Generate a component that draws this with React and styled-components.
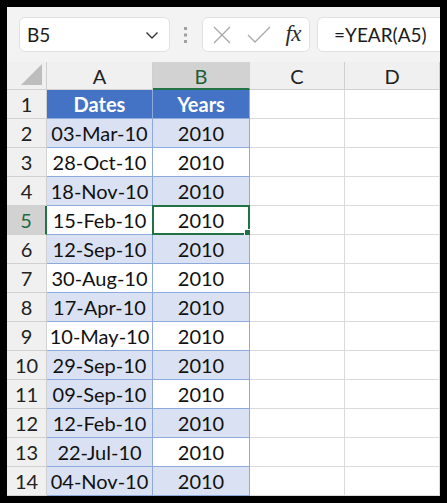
import React from "react";
import styled, { createGlobalStyle } from "styled-components";

const GlobalStyle = createGlobalStyle`
  html, body {
    margin: 0;
    padding: 0;
    background: #000;
  }
  body {
    font-family: Lato, "Liberation Sans", sans-serif;
  }
`;

const Frame = styled.div`
  box-sizing: border-box;
  width: 447px;
  height: 503px;
  padding: 7px;
  background: #000;
`;

const Window = styled.div`
  width: 433px;
  height: 489px;
  overflow: hidden;
  background: #f3f3f3;
  display: flex;
  flex-direction: column;
`;

const FormulaBar = styled.div`
  height: 55px;
  flex: none;
  display: flex;
  align-items: flex-start;
  padding: 10px 0 0 12px;
  box-sizing: border-box;
  overflow: hidden;
`;

const Box = styled.div`
  box-sizing: border-box;
  height: 35px;
  background: #fff;
  border: 1px solid #e1e1e1;
  border-radius: 6px;
  display: flex;
  align-items: center;
  flex: none;
`;

const NameBox = styled(Box)`
  width: 151px;
  padding: 0 8px 0 7px;
  justify-content: space-between;
  font-size: 19px;
  color: #1b1b1b;
`;

const Dots = styled.div`
  flex: none;
  width: 32px;
  height: 35px;
  display: flex;
  align-items: center;
  justify-content: center;
`;

const FxBox = styled(Box)`
  width: 108px;
  padding: 0 8px 0 9px;
  justify-content: space-between;
`;

const Fx = styled.span`
  font-family: "Liberation Serif", "DejaVu Serif", serif;
  font-style: italic;
  font-size: 23px;
  color: #2b2b2b;
  letter-spacing: -0.5px;
  padding-bottom: 2px;
`;

const FormulaBox = styled(Box)`
  margin-left: 7px;
  width: 220px;
  padding-left: 16px;
  font-size: 19px;
  color: #1b1b1b;
`;

const Grid = styled.div`
  display: grid;
  grid-template-columns: 40px 106px 97px 95px 95px;
  grid-template-rows: 28px repeat(14, 29px);
  background: #fff;
  font-size: 20px;
  color: #111;
`;

const Corner = styled.div`
  background: #f0f0f0;
  border-right: 1px solid #d0d0d0;
  border-bottom: 1px solid #d0d0d0;
  position: relative;
  overflow: hidden;
`;

const Triangle = styled.div`
  position: absolute;
  right: 4px;
  bottom: 4px;
  width: 0;
  height: 0;
  border-left: 21px solid transparent;
  border-bottom: 21px solid #bdbdbd;
`;

const ColHead = styled.div`
  box-sizing: border-box;
  display: flex;
  align-items: center;
  justify-content: center;
  background: ${(p) => (p.$active ? "#d2d2d2" : "#f0f0f0")};
  color: ${(p) => (p.$active ? "#1e5e37" : "#222")};
  border-right: 1px solid #d0d0d0;
  border-bottom: ${(p) => (p.$active ? "2px solid #217346" : "1px solid #d0d0d0")};
  padding-top: 1px;
`;

const RowHead = styled.div`
  box-sizing: border-box;
  display: flex;
  align-items: center;
  justify-content: center;
  background: ${(p) => (p.$active ? "#d2d2d2" : "#f0f0f0")};
  color: ${(p) => (p.$active ? "#1e6b3c" : "#222")};
  border-right: ${(p) => (p.$active ? "2px solid #217346" : "1px solid #d0d0d0")};
  border-bottom: 1px solid #d0d0d0;
`;

const Cell = styled.div`
  box-sizing: border-box;
  display: flex;
  align-items: center;
  justify-content: center;
  position: relative;
  background: ${(p) => (p.$head ? "#4472c4" : p.$band ? "#d9e1f2" : "#fff")};
  color: ${(p) => (p.$head ? "#fff" : "#111")};
  font-weight: ${(p) => (p.$head ? 700 : 400)};
  border-right: 1px solid ${(p) => (p.$table ? "#8ea9db" : "#dadada")};
  border-bottom: 1px solid ${(p) => (p.$table ? "#8ea9db" : "#dadada")};
`;

const Selection = styled.div`
  position: absolute;
  left: -1px;
  top: -1px;
  right: -1px;
  bottom: -1px;
  border: 2px solid #217346;
  pointer-events: none;
`;

const Handle = styled.div`
  position: absolute;
  right: -4px;
  bottom: -4px;
  width: 6px;
  height: 6px;
  background: #217346;
  border: 1px solid #fff;
`;

const rows = [
  ["03-Mar-10", true, true],
  ["28-Oct-10", false, false],
  ["18-Nov-10", true, true],
  ["15-Feb-10", false, false],
  ["12-Sep-10", true, true],
  ["30-Aug-10", false, false],
  ["17-Apr-10", true, true],
  ["10-May-10", false, false],
  ["29-Sep-10", true, true],
  ["09-Sep-10", true, false],
  ["12-Feb-10", true, true],
  ["22-Jul-10", true, false],
  ["04-Nov-10", true, true],
];

const Chevron = () => (
  <svg width="18" height="18" viewBox="0 0 18 18" fill="none">
    <path d="M3.5 6.5 L9 12 L14.5 6.5" stroke="#333" strokeWidth="1.4" />
  </svg>
);

const Cross = () => (
  <svg width="20" height="20" viewBox="0 0 20 20" fill="none">
    <path d="M2 2 L18 18 M18 2 L2 18" stroke="#a8a8a8" strokeWidth="1.3" />
  </svg>
);

const Check = () => (
  <svg width="26" height="20" viewBox="0 0 26 20" fill="none">
    <path d="M2 10 L9 17 L24 2" stroke="#a8a8a8" strokeWidth="1.3" />
  </svg>
);

const VDots = () => (
  <svg width="6" height="20" viewBox="0 0 6 20">
    <rect x="1" y="2" width="3" height="3" fill="#a0a0a0" />
    <rect x="1" y="8.5" width="3" height="3" fill="#a0a0a0" />
    <rect x="1" y="15" width="3" height="3" fill="#a0a0a0" />
  </svg>
);

export default function App() {
  return (
    <>
      <GlobalStyle />
      <Frame>
        <Window>
          <FormulaBar>
            <NameBox>
              <span>B5</span>
              <Chevron />
            </NameBox>
            <Dots>
              <VDots />
            </Dots>
            <FxBox>
              <Cross />
              <Check />
              <Fx>fx</Fx>
            </FxBox>
            <FormulaBox>=YEAR(A5)</FormulaBox>
          </FormulaBar>
          <Grid>
            <Corner>
              <Triangle />
            </Corner>
            <ColHead>A</ColHead>
            <ColHead $active>B</ColHead>
            <ColHead>C</ColHead>
            <ColHead>D</ColHead>

            <RowHead>1</RowHead>
            <Cell $head $table>Dates</Cell>
            <Cell $head $table>Years</Cell>
            <Cell />
            <Cell />

            {rows.map(([date, bandA, bandB], i) => {
              const n = i + 2;
              const active = n === 5;
              return (
                <React.Fragment key={n}>
                  <RowHead $active={active}>{n}</RowHead>
                  <Cell $table $band={bandA}>{date}</Cell>
                  <Cell $table $band={bandB}>
                    2010
                    {active && (
                      <Selection>
                        <Handle />
                      </Selection>
                    )}
                  </Cell>
                  <Cell />
                  <Cell />
                </React.Fragment>
              );
            })}
          </Grid>
        </Window>
      </Frame>
    </>
  );
}
